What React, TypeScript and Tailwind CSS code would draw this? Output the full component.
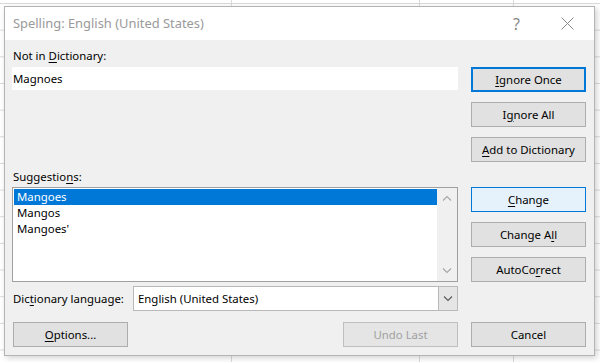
import React from "react";

const font = { fontFamily: '"Noto Sans", "Open Sans", sans-serif' };

function U({ children }: { children: React.ReactNode }) {
  return <span className="underline underline-offset-2">{children}</span>;
}

function Btn({
  children,
  variant = "normal",
  className = "",
}: {
  children: React.ReactNode;
  variant?: "normal" | "default" | "focus" | "disabled";
  className?: string;
}) {
  const styles = {
    normal: "border border-[#adadad] bg-[#e1e1e1] text-black",
    default: "border-2 border-[#0078d7] bg-[#e1e1e1] text-black",
    focus: "border border-[#0078d7] bg-[#e5f1fb] text-black",
    disabled: "border border-[#bfbfbf] bg-[#e5e5e5] text-[#a0a0a0]",
  }[variant];
  return (
    <div
      className={`flex h-[25px] w-[115px] items-center justify-center text-[11.4px] leading-none ${styles} ${className}`}
    >
      {children}
    </div>
  );
}

function Chevron({ up = false, color = "#a6a6a6" }: { up?: boolean; color?: string }) {
  return (
    <svg width="10" height="6" viewBox="0 0 10 6" fill="none">
      <path
        d={up ? "M1 5.5 L5 1.5 L9 5.5" : "M1 0.5 L5 4.5 L9 0.5"}
        stroke={color}
        strokeWidth="1.1"
      />
    </svg>
  );
}

export default function App() {
  const suggestions = ["Mangoes", "Mangos", "Mangoes'"];

  return (
    <div
      style={font}
      className="h-[362px] w-[600px] overflow-hidden bg-white bg-[linear-gradient(to_right,#dadada_1px,transparent_1px),linear-gradient(to_bottom,#dadada_1px,transparent_1px)] bg-[size:94px_26.67px] bg-[position:43px_3px] pl-[4px] pt-[6px]"
    >
      <div className="flex h-[350px] w-[591px] flex-col border border-[#b4b4b4] bg-[#f0f0f0] shadow-[2px_2px_6px_rgba(0,0,0,0.18)]">
        {/* title bar */}
        <div className="flex h-[33px] items-center bg-white pl-[8px]">
          <span className="text-[12.9px] text-[#9a9a9a]">Spelling: English (United States)</span>
          <span className="ml-auto mr-[41px] text-[16px] text-[#8a8a8a]">?</span>
          <svg className="mr-[20px]" width="13" height="13" viewBox="0 0 13 13">
            <path d="M0.5 0.5 L12.5 12.5 M12.5 0.5 L0.5 12.5" stroke="#8a8a8a" strokeWidth="1" />
          </svg>
        </div>

        {/* body */}
        <div className="flex pl-[7px] pr-[8px] text-[11.4px]">
          {/* left column */}
          <div className="flex w-[446px] flex-col">
            <div className="mt-[8px] h-[16px] pl-[1px] leading-[16px] text-black">
              Not in <U>D</U>ictionary:
            </div>
            <div className="mt-[3px] flex h-[23px] items-center bg-white pl-[1px] text-black">
              Magnoes
            </div>
            <div className="mt-[79px] h-[16px] pl-[1px] leading-[16px] text-black">
              Suggestio<U>n</U>s:
            </div>
            <div className="mt-[2px] flex h-[95px] border border-[#a0a0a0] bg-white">
              <div className="flex flex-1 flex-col pl-[1px] pt-[1px]">
                {suggestions.map((s, i) => (
                  <div
                    key={s}
                    className={`h-[16px] pl-[3px] leading-[16px] ${
                      i === 0 ? "bg-[#0078d7] text-white" : "text-black"
                    }`}
                  >
                    {s}
                  </div>
                ))}
              </div>
              <div className="flex w-[20px] flex-col items-center justify-between bg-[#f0f0f0] py-[7px]">
                <Chevron up />
                <Chevron />
              </div>
            </div>
            <div className="mt-[4px] flex h-[25px] items-center">
              <div className="w-[121px] pl-[1px] text-black">
                Dic<U>t</U>ionary language:
              </div>
              <div className="flex h-[25px] flex-1 border border-[#b9b9b9] bg-white">
                <div className="flex flex-1 items-center pl-[4px] text-black">
                  English (United States)
                </div>
                <div className="flex w-[19px] items-center justify-center border-l border-[#b9b9b9] bg-[#e5e5e5]">
                  <Chevron color="#5a5a5a" />
                </div>
              </div>
            </div>
            <div className="mt-[11px] flex justify-between pl-[1px]">
              <Btn>
                <U>O</U>ptions...
              </Btn>
              <Btn variant="disabled">Undo Last</Btn>
            </div>
          </div>

          {/* right column */}
          <div className="ml-[13px] flex flex-col">
            <Btn variant="default" className="mt-[27px]">
              <U>I</U>gnore Once
            </Btn>
            <Btn className="mt-[10px]">
              I<U>g</U>nore All
            </Btn>
            <Btn className="mt-[10px]">
              <U>A</U>dd to Dictionary
            </Btn>
            <Btn variant="focus" className="mt-[25px]">
              <U>C</U>hange
            </Btn>
            <Btn className="mt-[10px]">
              Change A<U>l</U>l
            </Btn>
            <Btn className="mt-[10px]">
              AutoCo<U>r</U>rect
            </Btn>
            <Btn className="mt-[40px]">Cancel</Btn>
          </div>
        </div>
      </div>
    </div>
  );
}
